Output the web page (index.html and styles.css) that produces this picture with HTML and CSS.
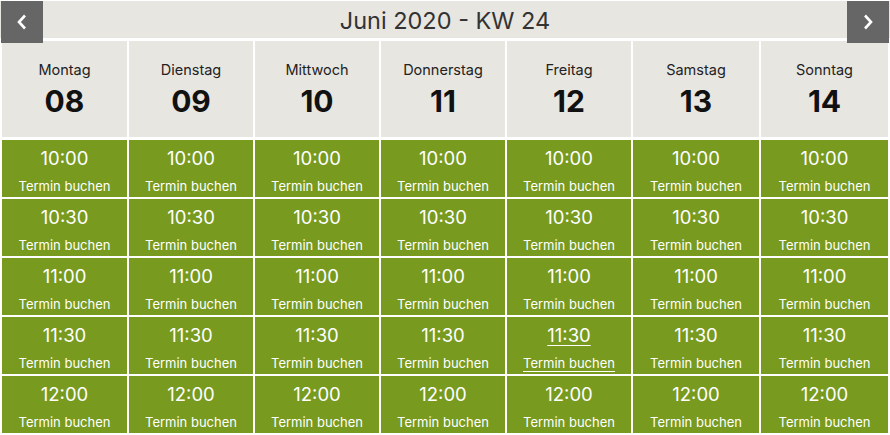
FILE: index.html
```html
<!DOCTYPE html>
<html lang="de">
<head>
<meta charset="utf-8">
<title>Kalender</title>
<link rel="stylesheet" href="styles.css">
</head>
<body>
<div class="cal">
  <div class="title">Juni 2020 - KW 24</div>
  <a class="nav prev" href="#"><svg width="12" height="16" viewBox="0 0 12 16"><path d="M9 1.5 L3 8 L9 14.5" fill="none" stroke="#fff" stroke-width="2.6"/></svg></a>
  <a class="nav next" href="#"><svg width="12" height="16" viewBox="0 0 12 16"><path d="M3 1.5 L9 8 L3 14.5" fill="none" stroke="#fff" stroke-width="2.6"/></svg></a>
  <div class="grid days">
    <div class="day"><span class="dname">Montag</span><span class="dnum">08</span></div>
    <div class="day"><span class="dname">Dienstag</span><span class="dnum">09</span></div>
    <div class="day"><span class="dname">Mittwoch</span><span class="dnum">10</span></div>
    <div class="day"><span class="dname">Donnerstag</span><span class="dnum">11</span></div>
    <div class="day"><span class="dname">Freitag</span><span class="dnum">12</span></div>
    <div class="day"><span class="dname">Samstag</span><span class="dnum">13</span></div>
    <div class="day"><span class="dname">Sonntag</span><span class="dnum">14</span></div>
  </div>
  <div class="grid slots" id="slots"></div>
</div>
<script src="app.js"></script>
</body>
</html>
```
FILE: app.js
```js
const times = ["10:00","10:30","11:00","11:30","12:00"];
const slots = document.getElementById("slots");
times.forEach((t, r) => {
  for (let c = 0; c < 7; c++) {
    const a = document.createElement("a");
    a.href = "#";
    a.className = "slot" + (r === 3 && c === 4 ? " hover" : "");
    a.innerHTML = '<span class="time">' + t + '</span><span class="book">Termin buchen</span>';
    slots.appendChild(a);
  }
});
```
FILE: styles.css
```css
html, body {
  margin: 0;
  padding: 0;
  background: #fff;
}
body {
  font-family: Inter, "Noto Sans", sans-serif;
}
.cal {
  position: relative;
  width: 890px;
  padding-top: 1px;
}
.title {
  height: 37px;
  background: #e8e6e1;
  color: #333;
  font-size: 23.5px;
  line-height: 39px;
  text-align: center;
}
.nav {
  position: absolute;
  top: 1px;
  width: 42px;
  height: 42px;
  background: #666;
  display: flex;
  align-items: center;
  justify-content: center;
}
.prev { left: 1px; }
.next { right: 1px; }
.grid {
  display: grid;
  grid-template-columns: 125px 124px 124px 124px 124px 126px 127px;
  gap: 2px;
  padding: 3px 2px 0 2px;
}
.day {
  height: 96px;
  background: #e8e6e1;
  display: flex;
  flex-direction: column;
  align-items: center;
  color: #111;
}
.dname {
  margin-top: 20px;
  font-size: 14.5px;
  line-height: 18px;
  color: #222;
}
.dnum {
  margin-top: 5px;
  font-size: 30px;
  line-height: 34px;
  font-weight: 700;
}
.slot {
  height: 57px;
  background: #789a1f;
  color: #fff;
  text-decoration: none;
  display: flex;
  flex-direction: column;
  align-items: center;
}
.time {
  margin-top: 7px;
  font-size: 18.5px;
  line-height: 22px;
}
.book {
  margin-top: 9px;
  font-size: 13px;
  line-height: 16px;
}
.slot.hover .time,
.slot.hover .book {
  text-decoration: underline;
  text-underline-offset: 3px;
}
```
